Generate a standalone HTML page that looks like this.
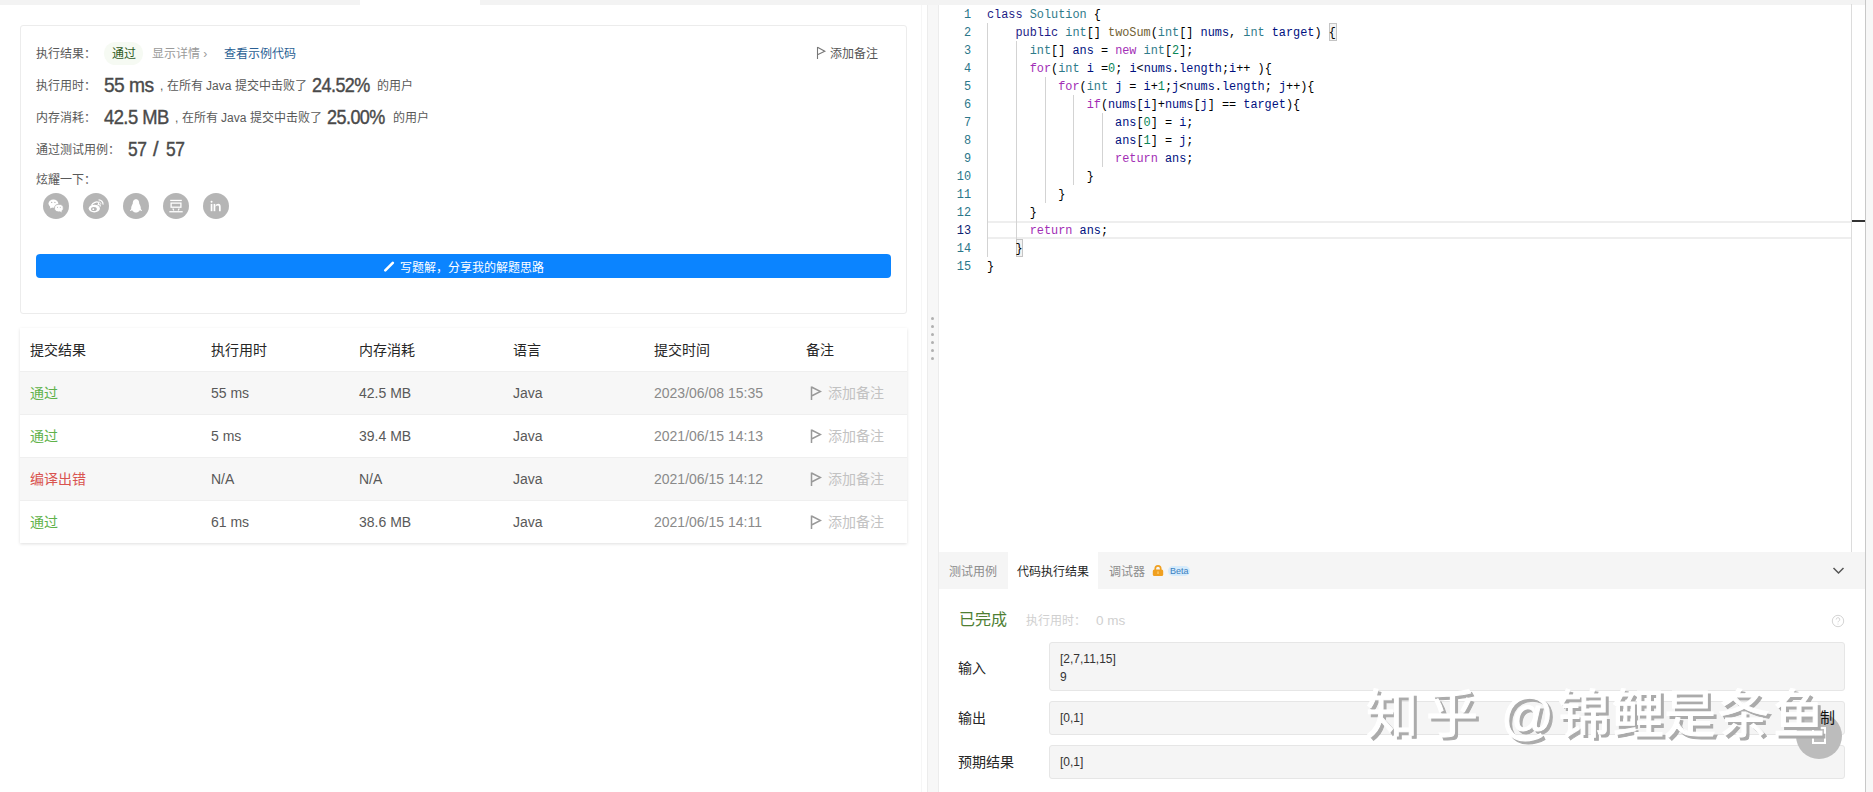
<!DOCTYPE html>
<html lang="zh-CN"><head><meta charset="utf-8">
<style>
*{box-sizing:border-box;margin:0;padding:0}
html,body{width:1873px;height:792px;overflow:hidden;background:#fff;font-family:"Liberation Sans",sans-serif;color:#333}
.a{position:absolute;white-space:nowrap}
.topstrip{left:0;top:0;width:1873px;height:5px;background:#f3f3f3}
.tabw{left:360px;top:0;width:120px;height:5px;background:#fff}
.card1{left:20px;top:25px;width:887px;height:289px;border:1px solid #ececec;border-radius:3px;background:#fff}
.lbl{font-size:12px;color:#595959;line-height:14px}
.big{font-size:20px;color:#4a4a4a;letter-spacing:-0.6px;line-height:22px;-webkit-text-stroke:0.4px #4a4a4a}
.sm{font-size:12px;color:#595959;line-height:14px}
.circ{width:26px;height:26px;border-radius:50%;background:#b5b5b5}
.btn{left:36px;top:254px;width:855px;height:24px;border-radius:4px;background:#0b84ff;color:#fff;font-size:12px;line-height:24px;text-align:center}
.card2{left:20px;top:328px;width:887px;height:215px;background:#fff;box-shadow:0 1px 3px rgba(0,0,0,0.13)}
.th{font-size:14px;color:#262626;line-height:16px}
.td{font-size:14px;color:#595959;line-height:16px}
.row{left:0;width:887px;height:43px;border-top:1px solid #ededed}
.divider{left:927px;top:5px;width:12px;height:787px;background:#f7f7f7;border-left:1px solid #ececec;border-right:1px solid #ececec}
.dot{width:3px;height:3px;border-radius:50%;background:#b0b0b0;left:931px}
.code{font-family:"Liberation Mono",monospace;font-size:11.87px;line-height:18px;white-space:pre}
.code div{height:18px}
.wm{font-size:52px;line-height:58px}
.wm.g{top:689px;color:#ababab;-webkit-text-stroke:1px #ababab}
.wm.w{top:686px;color:#fff;-webkit-text-stroke:1px #fff}
</style></head><body>
<div class="a topstrip"></div>
<div class="a tabw"></div>

<!-- card 1 -->
<div class="a card1"></div>
<div class="a lbl" style="left:36px;top:47px">执行结果：</div>
<div class="a" style="left:104px;top:42px;width:39px;height:23px;border-radius:12px;background:#f6faf3"></div>
<div class="a lbl" style="left:112px;top:47px;color:#2f5b1e">通过</div>
<div class="a lbl" style="left:152px;top:47px;color:#9a9a9a">显示详情 ›</div>
<div class="a lbl" style="left:224px;top:47px;color:#2a5f94">查看示例代码</div>
<svg class="a" style="left:816px;top:46px" width="11" height="14" viewBox="0 0 11 14"><path d="M1.5 1V13M1.5 1.3L8.8 5.3L1.5 8.7" fill="none" stroke="#777" stroke-width="1.1"/></svg>
<div class="a lbl" style="left:830px;top:47px;color:#555">添加备注</div>

<div class="a lbl" style="left:36px;top:79px">执行用时：</div>
<div class="a big" style="left:104px;top:74px;transform:scaleX(0.96);transform-origin:0 0">55 ms</div>
<div class="a sm" style="left:160px;top:79px">, 在所有 Java 提交中击败了</div>
<div class="a big" style="left:312px;top:74px;transform:scaleX(0.9);transform-origin:0 0">24.52%</div>
<div class="a sm" style="left:377px;top:79px">的用户</div>

<div class="a lbl" style="left:36px;top:111px">内存消耗：</div>
<div class="a big" style="left:104px;top:106px;transform:scaleX(0.92);transform-origin:0 0">42.5 MB</div>
<div class="a sm" style="left:175px;top:111px">, 在所有 Java 提交中击败了</div>
<div class="a big" style="left:327px;top:106px;transform:scaleX(0.9);transform-origin:0 0">25.00%</div>
<div class="a sm" style="left:393px;top:111px">的用户</div>

<div class="a lbl" style="left:36px;top:143px">通过测试用例：</div>
<div class="a big" style="left:128px;top:138px;transform:scaleX(0.87);transform-origin:0 0">57</div>
<div class="a big" style="left:153px;top:138px">/</div>
<div class="a big" style="left:166px;top:138px;transform:scaleX(0.87);transform-origin:0 0">57</div>

<div class="a lbl" style="left:36px;top:173px">炫耀一下：</div>
<svg class="a" style="left:43px;top:193px" width="26" height="26" viewBox="0 0 26 26"><circle cx="13" cy="13" r="13" fill="#b5b5b5"/><ellipse cx="10.4" cy="10.6" rx="4.9" ry="4.2" fill="#fff"/><path d="M7.5 13.5L6.8 15.6L9.4 14.4Z" fill="#fff"/><circle cx="8.7" cy="9.4" r=".65" fill="#b5b5b5"/><circle cx="11.9" cy="9.4" r=".65" fill="#b5b5b5"/><ellipse cx="15.9" cy="15.1" rx="4.4" ry="3.8" fill="#fff" stroke="#b5b5b5" stroke-width=".8"/><path d="M18 17.8L19.2 19.4L17 18.5Z" fill="#fff"/><circle cx="14.5" cy="14.3" r=".55" fill="#b5b5b5"/><circle cx="17.3" cy="14.3" r=".55" fill="#b5b5b5"/></svg>
<svg class="a" style="left:83px;top:193px" width="26" height="26" viewBox="0 0 26 26"><circle cx="13" cy="13" r="13" fill="#b5b5b5"/><ellipse cx="11.3" cy="15.6" rx="5.6" ry="3.9" fill="#fff"/><path d="M8.5 12.3C10 9.5 14 8.3 15.2 9.4C16.1 10.3 15.3 11.6 15.3 11.6C17 11.2 17.6 12.2 17 13.5" fill="none" stroke="#fff" stroke-width="1.2"/><ellipse cx="10.9" cy="16" rx="2.9" ry="2" fill="#b5b5b5"/><circle cx="10.3" cy="16.2" r=".9" fill="#fff"/><path d="M15.6 6.9A4.2 4.2 0 0 1 20 11.6" fill="none" stroke="#fff" stroke-width="1.2"/><path d="M15.4 9A2.1 2.1 0 0 1 17.8 11.3" fill="none" stroke="#fff" stroke-width="1"/></svg>
<svg class="a" style="left:123px;top:193px" width="26" height="26" viewBox="0 0 26 26"><circle cx="13" cy="13" r="13" fill="#b5b5b5"/><path d="M13 6.3C10.4 6.3 9.8 8.6 9.8 10.6C9 12.1 8 14 8.2 15.8L6.9 17.9C7.6 18.3 8.6 17.6 9.1 17C9.5 18.3 10.6 19.2 12 19.4L14 19.4C15.4 19.2 16.5 18.3 16.9 17C17.4 17.6 18.4 18.3 19.1 17.9L17.8 15.8C18 14 17 12.1 16.2 10.6C16.2 8.6 15.6 6.3 13 6.3Z" fill="#fff"/></svg>
<svg class="a" style="left:163px;top:193px" width="26" height="26" viewBox="0 0 26 26"><circle cx="13" cy="13" r="13" fill="#b5b5b5"/><rect x="7.2" y="6.8" width="11.6" height="1.3" fill="#fff"/><rect x="8.1" y="10.1" width="9.8" height="4.1" fill="none" stroke="#fff" stroke-width="1.3"/><rect x="6.3" y="18.1" width="13.4" height="1.3" fill="#fff"/><path d="M9.8 15.6L10.8 17.6M16.2 15.6L15.2 17.6" stroke="#fff" stroke-width="1.2"/></svg>
<svg class="a" style="left:203px;top:193px" width="26" height="26" viewBox="0 0 26 26"><circle cx="13" cy="13" r="13" fill="#b5b5b5"/><rect x="7.7" y="10.9" width="1.7" height="7.3" fill="#fff"/><circle cx="8.55" cy="8.7" r="1" fill="#fff"/><rect x="10.6" y="10.9" width="1.7" height="7.3" fill="#fff"/><path d="M12.3 13.4C12.6 11.5 14 10.8 15.3 10.8C16.9 10.8 17.7 11.8 17.7 13.7V18.2H16V14.2C16 13.1 15.6 12.5 14.8 12.5C13.3 12.5 12.3 13.4 12.3 14.7Z" fill="#fff"/></svg>

<div class="a btn"></div>
<svg class="a" style="left:383px;top:261px" width="12" height="11" viewBox="0 0 12 11"><path d="M2.3 9.3L9.8 1.8" stroke="#fff" stroke-width="2.6" stroke-linecap="round"/></svg>
<div class="a" style="left:400px;top:261px;font-size:12px;line-height:14px;color:#fff">写题解，分享我的解题思路</div>

<!-- card 2 table -->
<div class="a card2"></div>
<div class="a" style="left:20px;top:371px;width:887px;height:43px;background:#f7f7f7;border-top:1px solid #efefef"></div>
<div class="a" style="left:20px;top:414px;width:887px;height:43px;background:#fff;border-top:1px solid #efefef"></div>
<div class="a" style="left:20px;top:457px;width:887px;height:43px;background:#f7f7f7;border-top:1px solid #efefef"></div>
<div class="a" style="left:20px;top:500px;width:887px;height:43px;background:#fff;border-top:1px solid #efefef"></div>
<div class="a th" style="left:30px;top:342px">提交结果</div>
<div class="a th" style="left:211px;top:342px">执行用时</div>
<div class="a th" style="left:359px;top:342px">内存消耗</div>
<div class="a th" style="left:513px;top:342px">语言</div>
<div class="a th" style="left:654px;top:342px">提交时间</div>
<div class="a th" style="left:806px;top:342px">备注</div>
<div class="a td" style="left:30px;top:385px;color:#5fb24a">通过</div>
<div class="a td" style="left:211px;top:385px">55 ms</div>
<div class="a td" style="left:359px;top:385px">42.5 MB</div>
<div class="a td" style="left:513px;top:385px">Java</div>
<div class="a td" style="left:654px;top:385px;color:#8a8a8a">2023/06/08 15:35</div>
<svg class="a" style="left:810px;top:385px" width="12" height="16" viewBox="0 0 12 16"><path d="M1.5 1.5V15M1.5 2L10.5 6.5L1.5 11" fill="none" stroke="#999" stroke-width="1.5"/></svg>
<div class="a td" style="left:828px;top:385px;color:#c2c2c2">添加备注</div>
<div class="a td" style="left:30px;top:428px;color:#5fb24a">通过</div>
<div class="a td" style="left:211px;top:428px">5 ms</div>
<div class="a td" style="left:359px;top:428px">39.4 MB</div>
<div class="a td" style="left:513px;top:428px">Java</div>
<div class="a td" style="left:654px;top:428px;color:#8a8a8a">2021/06/15 14:13</div>
<svg class="a" style="left:810px;top:428px" width="12" height="16" viewBox="0 0 12 16"><path d="M1.5 1.5V15M1.5 2L10.5 6.5L1.5 11" fill="none" stroke="#999" stroke-width="1.5"/></svg>
<div class="a td" style="left:828px;top:428px;color:#c2c2c2">添加备注</div>
<div class="a td" style="left:30px;top:471px;color:#d9534f">编译出错</div>
<div class="a td" style="left:211px;top:471px">N/A</div>
<div class="a td" style="left:359px;top:471px">N/A</div>
<div class="a td" style="left:513px;top:471px">Java</div>
<div class="a td" style="left:654px;top:471px;color:#8a8a8a">2021/06/15 14:12</div>
<svg class="a" style="left:810px;top:471px" width="12" height="16" viewBox="0 0 12 16"><path d="M1.5 1.5V15M1.5 2L10.5 6.5L1.5 11" fill="none" stroke="#999" stroke-width="1.5"/></svg>
<div class="a td" style="left:828px;top:471px;color:#c2c2c2">添加备注</div>
<div class="a td" style="left:30px;top:514px;color:#5fb24a">通过</div>
<div class="a td" style="left:211px;top:514px">61 ms</div>
<div class="a td" style="left:359px;top:514px">38.6 MB</div>
<div class="a td" style="left:513px;top:514px">Java</div>
<div class="a td" style="left:654px;top:514px;color:#8a8a8a">2021/06/15 14:11</div>
<svg class="a" style="left:810px;top:514px" width="12" height="16" viewBox="0 0 12 16"><path d="M1.5 1.5V15M1.5 2L10.5 6.5L1.5 11" fill="none" stroke="#999" stroke-width="1.5"/></svg>
<div class="a td" style="left:828px;top:514px;color:#c2c2c2">添加备注</div>

<div class="a" style="left:921px;top:5px;width:1px;height:787px;background:#f6f6f6"></div>
<div class="a divider"></div>
<div class="a" style="left:939px;top:5px;width:926px;height:547px;background:#fff"></div>
<div class="a" style="left:987px;top:221px;width:864px;height:18px;border-top:2px solid #eee;border-bottom:2px solid #eee"></div>
<div class="a" style="left:987px;top:23px;width:1px;height:234px;background:#d3d3d3"></div>
<div class="a" style="left:1016px;top:41px;width:1px;height:198px;background:#d3d3d3"></div>
<div class="a" style="left:1045px;top:77px;width:1px;height:126px;background:#d3d3d3"></div>
<div class="a" style="left:1073px;top:95px;width:1px;height:90px;background:#d3d3d3"></div>
<div class="a" style="left:1102px;top:113px;width:1px;height:54px;background:#d3d3d3"></div>
<div class="a" style="left:1329px;top:23px;width:8px;height:18px;border:1px solid #c4c4c4;background:#f3f3f3"></div>
<div class="a" style="left:1016px;top:239px;width:7px;height:18px;border:1px solid #c4c4c4;background:#f3f3f3"></div>
<div class="a code" style="left:940px;top:6px;width:31px;text-align:right"><div style="color:#2b7689">1</div><div style="color:#2b7689">2</div><div style="color:#2b7689">3</div><div style="color:#2b7689">4</div><div style="color:#2b7689">5</div><div style="color:#2b7689">6</div><div style="color:#2b7689">7</div><div style="color:#2b7689">8</div><div style="color:#2b7689">9</div><div style="color:#2b7689">10</div><div style="color:#2b7689">11</div><div style="color:#2b7689">12</div><div style="color:#0b216f">13</div><div style="color:#2b7689">14</div><div style="color:#2b7689">15</div></div>
<div class="a code" style="left:987px;top:6px"><div><span style="color:#1c1c86">class </span><span style="color:#2f7b8a">Solution</span><span style="color:#000"> {</span></div><div><span style="color:#000">    </span><span style="color:#1c1c86">public </span><span style="color:#2f7b8a">int</span><span style="color:#000">[] </span><span style="color:#725f34">twoSum</span><span style="color:#000">(</span><span style="color:#2f7b8a">int</span><span style="color:#000">[] </span><span style="color:#001080">nums</span><span style="color:#000">, </span><span style="color:#2f7b8a">int </span><span style="color:#001080">target</span><span style="color:#000">) </span><span style="color:#000">{</span></div><div><span style="color:#000">      </span><span style="color:#2f7b8a">int</span><span style="color:#000">[] </span><span style="color:#001080">ans</span><span style="color:#000"> = </span><span style="color:#a22db5">new </span><span style="color:#2f7b8a">int</span><span style="color:#000">[</span><span style="color:#098658">2</span><span style="color:#000">];</span></div><div><span style="color:#000">      </span><span style="color:#a22db5">for</span><span style="color:#000">(</span><span style="color:#2f7b8a">int </span><span style="color:#001080">i</span><span style="color:#000"> =</span><span style="color:#098658">0</span><span style="color:#000">; </span><span style="color:#001080">i</span><span style="color:#000">&lt;</span><span style="color:#001080">nums</span><span style="color:#000">.</span><span style="color:#001080">length</span><span style="color:#000">;</span><span style="color:#001080">i</span><span style="color:#000">++ ){</span></div><div><span style="color:#000">          </span><span style="color:#a22db5">for</span><span style="color:#000">(</span><span style="color:#2f7b8a">int </span><span style="color:#001080">j</span><span style="color:#000"> = </span><span style="color:#001080">i</span><span style="color:#000">+</span><span style="color:#098658">1</span><span style="color:#000">;</span><span style="color:#001080">j</span><span style="color:#000">&lt;</span><span style="color:#001080">nums</span><span style="color:#000">.</span><span style="color:#001080">length</span><span style="color:#000">; </span><span style="color:#001080">j</span><span style="color:#000">++){</span></div><div><span style="color:#000">              </span><span style="color:#a22db5">if</span><span style="color:#000">(</span><span style="color:#001080">nums</span><span style="color:#000">[</span><span style="color:#001080">i</span><span style="color:#000">]+</span><span style="color:#001080">nums</span><span style="color:#000">[</span><span style="color:#001080">j</span><span style="color:#000">] == </span><span style="color:#001080">target</span><span style="color:#000">){</span></div><div><span style="color:#000">                  </span><span style="color:#001080">ans</span><span style="color:#000">[</span><span style="color:#098658">0</span><span style="color:#000">] = </span><span style="color:#001080">i</span><span style="color:#000">;</span></div><div><span style="color:#000">                  </span><span style="color:#001080">ans</span><span style="color:#000">[</span><span style="color:#098658">1</span><span style="color:#000">] = </span><span style="color:#001080">j</span><span style="color:#000">;</span></div><div><span style="color:#000">                  </span><span style="color:#a22db5">return </span><span style="color:#001080">ans</span><span style="color:#000">;</span></div><div><span style="color:#000">              }</span></div><div><span style="color:#000">          }</span></div><div><span style="color:#000">      }</span></div><div><span style="color:#000">      </span><span style="color:#a22db5">return </span><span style="color:#001080">ans</span><span style="color:#000">;</span></div><div><span style="color:#000">    }</span></div><div><span style="color:#000">}</span></div></div>
<div class="a" style="left:1851px;top:4px;width:1px;height:548px;background:#dcdcdc"></div>
<div class="a" style="left:1852px;top:220px;width:13px;height:2px;background:#333"></div>
<div class="a" style="left:1865px;top:0px;width:1px;height:792px;background:#c8c8c8"></div>
<div class="a" style="left:1866px;top:0px;width:7px;height:792px;background:#f7f7f7"></div>
<!-- console -->
<div class="a" style="left:939px;top:552px;width:926px;height:37px;background:#f5f5f5"></div>
<div class="a" style="left:1008px;top:552px;width:90px;height:37px;background:#fff"></div>
<div class="a" style="left:949px;top:565px;font-size:12px;line-height:14px;color:#8c8c8c">测试用例</div>
<div class="a" style="left:1017px;top:565px;font-size:12px;line-height:14px;color:#262626">代码执行结果</div>
<div class="a" style="left:1109px;top:565px;font-size:12px;line-height:14px;color:#8c8c8c">调试器</div>
<svg class="a" style="left:1152px;top:565px" width="12" height="11" viewBox="0 0 12 11"><path d="M3.3 5V3.6a2.7 2.7 0 0 1 5.4 0V5" fill="none" stroke="#f0a020" stroke-width="1.7"/><rect x=".8" y="4.6" width="10.4" height="6.4" rx="1.5" fill="#f0a020"/><rect x="5.4" y="6.4" width="1.2" height="2.6" fill="#ffd27a"/></svg>
<div class="a" style="left:1168px;top:566px;width:22px;height:10px;border-radius:5px;background:#d6ebfb"></div>
<div class="a" style="left:1170px;top:565.5px;font-size:9px;line-height:11px;color:#3a7fc0">Beta</div>
<svg class="a" style="left:1832px;top:566px" width="13" height="9" viewBox="0 0 13 9"><path d="M1.5 2L6.5 7L11.5 2" fill="none" stroke="#555" stroke-width="1.5"/></svg>

<div class="a" style="left:959px;top:611px;font-size:16px;line-height:18px;color:#4f7f34">已完成</div>
<div class="a" style="left:1026px;top:614px;font-size:12px;line-height:14px;color:#d0d0d0">执行用时：</div>
<div class="a" style="left:1096px;top:613px;font-size:13.5px;line-height:16px;color:#d0d0d0">0 ms</div>
<svg class="a" style="left:1831px;top:614px" width="14" height="14" viewBox="0 0 14 14"><circle cx="7" cy="7" r="5.7" fill="none" stroke="#d5d5d5" stroke-width="1"/><path d="M5.2 5.5a1.8 1.8 0 1 1 2.6 1.6c-.6.3-.8.6-.8 1.2" fill="none" stroke="#d5d5d5" stroke-width="1"/><circle cx="7" cy="10" r=".6" fill="#d5d5d5"/></svg>

<div class="a" style="left:958px;top:660px;font-size:14px;line-height:16px;color:#262626">输入</div>
<div class="a" style="left:1049px;top:642px;width:796px;height:49px;background:#f5f5f5;border:1px solid #e6e6e6;border-radius:3px"></div>
<div class="a" style="left:1060px;top:650px;font-size:12px;line-height:18px;color:#333">[2,7,11,15]<br>9</div>

<div class="a" style="left:958px;top:710px;font-size:14px;line-height:16px;color:#262626">输出</div>
<div class="a" style="left:1049px;top:701px;width:796px;height:34px;background:#f5f5f5;border:1px solid #e6e6e6;border-radius:3px"></div>
<div class="a" style="left:1060px;top:709px;font-size:12px;line-height:18px;color:#333">[0,1]</div>

<div class="a" style="left:958px;top:754px;font-size:14px;line-height:16px;color:#262626">预期结果</div>
<div class="a" style="left:1049px;top:745px;width:796px;height:34px;background:#f5f5f5;border:1px solid #e6e6e6;border-radius:3px"></div>
<div class="a" style="left:1060px;top:753px;font-size:12px;line-height:18px;color:#333">[0,1]</div>

<!-- watermark -->
<div class="a" style="left:1796px;top:713px;width:46px;height:46px;border-radius:50%;background:#bcbcbc"></div>
<div class="a" style="left:1812px;top:727px;width:14px;height:17px;border:2px solid #fff"></div>
<div class="a wm g" style="left:1369px">知</div><div class="a wm g" style="left:1429px">乎</div><div class="a wm g" style="left:1504px">@</div><div class="a wm g" style="left:1561px">锦</div><div class="a wm g" style="left:1615px">鲤</div><div class="a wm g" style="left:1667px">是</div><div class="a wm g" style="left:1721px">条</div><div class="a wm g" style="left:1776px">鱼</div>
<div class="a wm w" style="left:1366px">知</div><div class="a wm w" style="left:1426px">乎</div><div class="a wm w" style="left:1501px">@</div><div class="a wm w" style="left:1558px">锦</div><div class="a wm w" style="left:1612px">鲤</div><div class="a wm w" style="left:1664px">是</div><div class="a wm w" style="left:1718px">条</div><div class="a wm w" style="left:1773px">鱼</div>

<div class="a" style="left:1820px;top:710px;font-size:15px;line-height:16px;color:#111">制</div>
<!-- divider dots -->
<div class="a dot" style="top:317px"></div>
<div class="a dot" style="top:325px"></div>
<div class="a dot" style="top:333px"></div>
<div class="a dot" style="top:341px"></div>
<div class="a dot" style="top:349px"></div>
<div class="a dot" style="top:357px"></div>
</body></html>
